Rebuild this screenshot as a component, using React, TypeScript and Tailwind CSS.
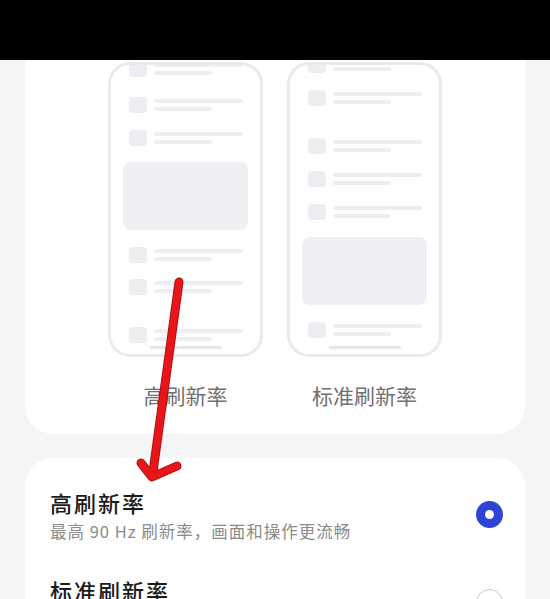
import React from 'react';

const FONT = { fontFamily: '"Noto Sans CJK SC", "Noto Sans", sans-serif' };

type Item = { kind: 'row' | 'block'; mt: number };

const LEFT_PHONE: Item[] = [
  { kind: 'row', mt: -4 },
  { kind: 'row', mt: 20 },
  { kind: 'row', mt: 17 },
  { kind: 'block', mt: 16 },
  { kind: 'row', mt: 17 },
  { kind: 'row', mt: 16 },
  { kind: 'row', mt: 32 },
];

const RIGHT_PHONE: Item[] = [
  { kind: 'row', mt: -8 },
  { kind: 'row', mt: 17 },
  { kind: 'row', mt: 32 },
  { kind: 'row', mt: 17 },
  { kind: 'row', mt: 17 },
  { kind: 'block', mt: 17 },
  { kind: 'row', mt: 17 },
];

function SkeletonRow({ mt }: { mt: number }) {
  return (
    <div className="flex items-start gap-[7px] pl-[18px]" style={{ marginTop: mt }}>
      <div className="h-[16px] w-[18px] shrink-0 rounded-[4px] bg-[#eceef1]" />
      <div className="flex flex-col pt-[2px]">
        <div className="h-[4px] w-[89px] rounded-full bg-[#eceef1]" />
        <div className="mt-[4px] h-[4px] w-[58px] rounded-full bg-[#eceef1]" />
      </div>
    </div>
  );
}

function Phone({ items, label }: { items: Item[]; label: string }) {
  return (
    <div className="flex flex-col items-center">
      <div className="relative h-[295px] w-[155px] overflow-hidden rounded-[22px] border-[3px] border-[#e8eaed] bg-white">
        <div className="flex flex-col">
          {items.map((it, i) =>
            it.kind === 'row' ? (
              <SkeletonRow key={i} mt={it.mt} />
            ) : (
              <div
                key={i}
                className="mx-[12px] h-[68px] rounded-[8px] bg-[#eef0f3]"
                style={{ marginTop: it.mt }}
              />
            ),
          )}
        </div>
        <div className="absolute bottom-[5px] left-1/2 h-[3px] w-[72px] -translate-x-1/2 rounded-full bg-[#e3e5e8]" />
      </div>
      <div className="mt-[24px] text-[21px] leading-[28px] text-[#707070]">{label}</div>
    </div>
  );
}

function Radio({ checked }: { checked: boolean }) {
  return checked ? (
    <div className="flex h-[27px] w-[27px] shrink-0 items-center justify-center rounded-full bg-[#2f44d6]">
      <div className="h-[9px] w-[9px] rounded-full bg-white" />
    </div>
  ) : (
    <div className="h-[27px] w-[27px] shrink-0 rounded-full border-[1.5px] border-[#c9c9c9]" />
  );
}

function Option({ title, desc, checked }: { title: string; desc?: string; checked: boolean }) {
  return (
    <div className="flex items-center justify-between pl-[25px] pr-[22px]">
      <div className="flex flex-col">
        <div className="text-[22px] font-medium leading-[30px] tracking-[2px] text-[#1c1c1c]">{title}</div>
        {desc ? (
          <div className="mt-[3px] text-[16.5px] leading-[22px] tracking-[1px] text-[#8a8a8a]">{desc}</div>
        ) : (
          <div className="mt-[3px] h-[22px]" />
        )}
      </div>
      <Radio checked={checked} />
    </div>
  );
}

export default function App() {
  return (
    <div className="relative h-[599px] w-[550px] overflow-hidden bg-[#f5f5f5]" style={FONT}>
      <div className="h-[60px] bg-black" />
      <div className="mx-[25px] rounded-b-[28px] bg-white pb-[25px] pt-[2px]">
        <div className="flex justify-center gap-[24px]">
          <Phone items={LEFT_PHONE} label="高刷新率" />
          <Phone items={RIGHT_PHONE} label="标准刷新率" />
        </div>
      </div>
      <div className="mx-[25px] mt-[24px] rounded-t-[28px] bg-white pt-[29px]">
        <div className="flex flex-col gap-[33px]">
          <Option title="高刷新率" desc="最高 90 Hz 刷新率，画面和操作更流畅" checked />
          <Option title="标准刷新率" checked={false} />
        </div>
      </div>
      <svg className="pointer-events-none absolute left-0 top-0" width="550" height="599" viewBox="0 0 550 599">
        <g fill="none" strokeLinecap="round" strokeLinejoin="round">
          <g stroke="#b00d0d" strokeWidth="9">
            <path d="M179 282 L153 472" />
            <path d="M141 463 L152 477 L177 466" />
          </g>
          <g stroke="#e8161a" strokeWidth="7">
            <path d="M179 282 L153 472" />
            <path d="M141 463 L152 477 L177 466" />
          </g>
        </g>
      </svg>
    </div>
  );
}
